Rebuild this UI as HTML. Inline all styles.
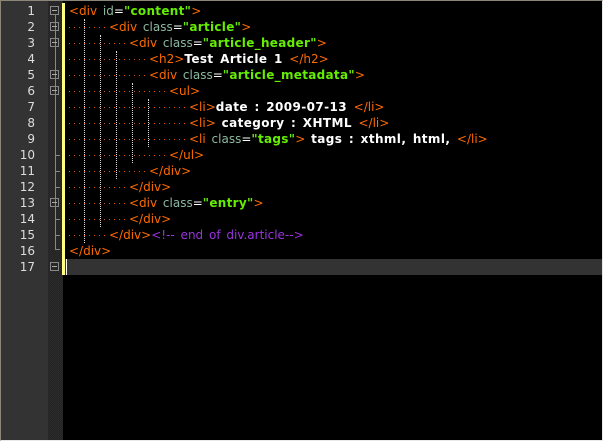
<!DOCTYPE html>
<html><head><style>
html,body{margin:0;padding:0;width:603px;height:441px;overflow:hidden;background:#000}
#f{position:absolute;left:0;top:0;width:601px;height:439px;border-top:1px solid #8c8678;border-left:1px solid #8c8678;border-right:1px solid #e8e8e8;border-bottom:1px solid #e8e8e8;background:#000}
#g{position:absolute;left:0;top:0;width:47px;height:439px;background:#333}
#fold{position:absolute;left:47px;top:0;width:15px;height:439px;background-color:#222;background-image:linear-gradient(45deg,#2c2c2c 25%,transparent 25%,transparent 75%,#2c2c2c 75%),linear-gradient(45deg,#2c2c2c 25%,transparent 25%,transparent 75%,#2c2c2c 75%);background-size:2px 2px;background-position:0 0,1px 1px}
#y{position:absolute;left:61px;top:2px;width:3px;height:272px;background:#ffff80}
#cur{position:absolute;left:64px;top:258px;width:537px;height:16px;background:#333}
#caret{position:absolute;left:65px;top:258px;width:1px;height:16px;background:#fff}
.n{position:absolute;left:0;width:34px;text-align:right;color:#ddd;font:12px "DejaVu Sans",sans-serif;line-height:16px}
.l{position:absolute;white-space:pre;font:12px "DejaVu Sans",sans-serif;line-height:16px;color:#ff6a00;word-spacing:2px}
.a{color:#8fb8a0}.s{color:#66ee00;font-weight:bold;letter-spacing:0.3px}.t{color:#fff;font-weight:bold;letter-spacing:0.4px}.c{color:#9933dd}
.b{position:absolute;left:49px;width:9px;height:9px;border:1px solid #888;box-sizing:border-box}
.b:after{content:"";position:absolute;left:1px;top:3px;width:5px;height:1px;background:#aaa}
.v{position:absolute;left:54px;width:1px;background:#888}
.h{position:absolute;left:54px;width:5px;height:1px;background:#888}
.d{position:absolute;width:0;border-left:1px dotted #ddd}
.dots{position:absolute;left:68px;height:1px;background-image:linear-gradient(90deg,#e05000 1px,transparent 1px);background-size:5px 1px}
</style></head><body><div id="f">
<div id="g"></div><div id="fold"></div><div id="y"></div><div id="cur"></div><div id="caret"></div>
<div class="n" style="top:2px">1</div><div class="n" style="top:18px">2</div><div class="n" style="top:34px">3</div><div class="n" style="top:50px">4</div><div class="n" style="top:66px">5</div><div class="n" style="top:82px">6</div><div class="n" style="top:98px">7</div><div class="n" style="top:114px">8</div><div class="n" style="top:130px">9</div><div class="n" style="top:146px">10</div><div class="n" style="top:162px">11</div><div class="n" style="top:178px">12</div><div class="n" style="top:194px">13</div><div class="n" style="top:210px">14</div><div class="n" style="top:226px">15</div><div class="n" style="top:242px">16</div><div class="n" style="top:258px">17</div>
<div class="v" style="top:14px;height:234px"></div>
<div class="b" style="top:5px"></div><div class="b" style="top:21px"></div><div class="b" style="top:37px"></div><div class="b" style="top:69px"></div><div class="b" style="top:85px"></div><div class="b" style="top:197px"></div><div class="b" style="top:261px"></div>
<div class="h" style="top:154px"></div><div class="h" style="top:170px"></div><div class="h" style="top:186px"></div><div class="h" style="top:218px"></div><div class="h" style="top:234px"></div><div class="h" style="top:248px"></div>
<div class="d" style="left:83px;top:18px;height:224px"></div>
<div class="d" style="left:99px;top:34px;height:192px"></div>
<div class="d" style="left:115px;top:50px;height:128px"></div>
<div class="d" style="left:131px;top:82px;height:80px"></div>
<div class="d" style="left:147px;top:98px;height:48px"></div>
<div class="dots" style="top:26px;width:40px"></div><div class="dots" style="top:42px;width:60px"></div><div class="dots" style="top:58px;width:80px"></div><div class="dots" style="top:74px;width:80px"></div><div class="dots" style="top:90px;width:100px"></div><div class="dots" style="top:106px;width:120px"></div><div class="dots" style="top:122px;width:120px"></div><div class="dots" style="top:138px;width:120px"></div><div class="dots" style="top:154px;width:100px"></div><div class="dots" style="top:170px;width:80px"></div><div class="dots" style="top:186px;width:60px"></div><div class="dots" style="top:202px;width:60px"></div><div class="dots" style="top:218px;width:60px"></div><div class="dots" style="top:234px;width:40px"></div>
<div class="l" style="top:2px;left:68px">&lt;div <span class="a">id</span><span style="color:#fff">=</span><span class="s">"content"</span>&gt;</div>
<div class="l" style="top:18px;left:108px">&lt;div <span class="a">class</span><span style="color:#fff">=</span><span class="s">"article"</span>&gt;</div>
<div class="l" style="top:34px;left:128px">&lt;div <span class="a">class</span><span style="color:#fff">=</span><span class="s">"article_header"</span>&gt;</div>
<div class="l" style="top:50px;left:148px">&lt;h2&gt;<span class="t">Test Article 1 </span>&lt;/h2&gt;</div>
<div class="l" style="top:66px;left:148px">&lt;div <span class="a">class</span><span style="color:#fff">=</span><span class="s">"article_metadata"</span>&gt;</div>
<div class="l" style="top:82px;left:168px">&lt;ul&gt;</div>
<div class="l" style="top:98px;left:188px">&lt;li&gt;<span class="t">date : 2009-07-13 </span>&lt;/li&gt;</div>
<div class="l" style="top:114px;left:188px">&lt;li&gt; <span class="t">category : XHTML </span>&lt;/li&gt;</div>
<div class="l" style="top:130px;left:188px">&lt;li <span class="a">class</span><span style="color:#fff">=</span><span class="s">"tags"</span>&gt; <span class="t">tags : xthml, html, </span>&lt;/li&gt;</div>
<div class="l" style="top:146px;left:168px">&lt;/ul&gt;</div>
<div class="l" style="top:162px;left:148px">&lt;/div&gt;</div>
<div class="l" style="top:178px;left:128px">&lt;/div&gt;</div>
<div class="l" style="top:194px;left:128px">&lt;div <span class="a">class</span><span style="color:#fff">=</span><span class="s">"entry"</span>&gt;</div>
<div class="l" style="top:210px;left:128px">&lt;/div&gt;</div>
<div class="l" style="top:226px;left:108px">&lt;/div&gt;<span class="c">&lt;!-- end of div.article--&gt;</span></div>
<div class="l" style="top:242px;left:68px">&lt;/div&gt;</div>
</div></body></html>
